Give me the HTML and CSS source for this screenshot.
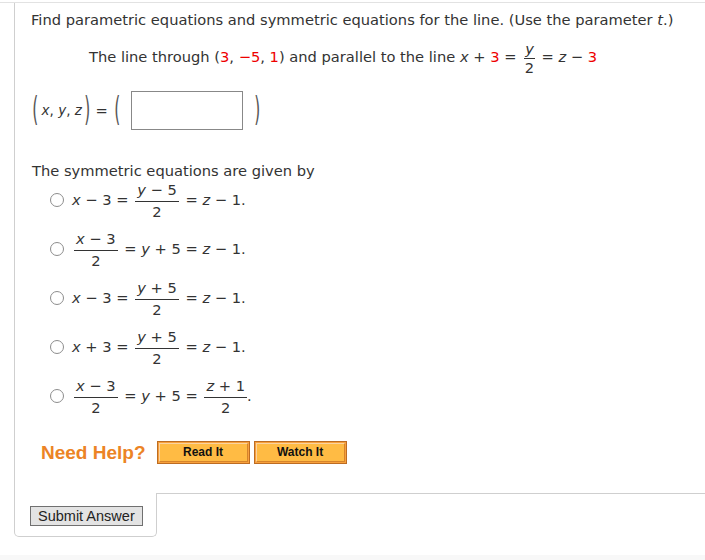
FILE: index.html
```html
<!DOCTYPE html>
<html>
<head>
<meta charset="utf-8">
<link rel="stylesheet" href="styles.css">
</head>
<body>
<div class="page">
  <div class="panel">
    <p class="q">Find parametric equations and symmetric equations for the line. (Use the parameter <i>t</i>.)</p>
    <div class="given">The line through (<span class="r">3</span>, <span class="r">−5</span>, <span class="r">1</span>) and parallel to the line <i>x</i> + <span class="r">3</span> = <span class="frac sm"><span class="num"><i>y</i></span><span class="den">2</span></span> = <i>z</i> − <span class="r">3</span></div>
    <div class="param">
      <span class="paren">(</span><span class="vars"><i>x</i>, <i>y</i>, <i>z</i></span><span class="paren">)</span><span class="eq">=</span><span class="paren">(</span><span class="box"></span><span class="paren">)</span>
    </div>
    <p class="sym">The symmetric equations are given by</p>
    <ul class="opts">
      <li><span class="radio"></span><span class="m"><i>x</i> − 3 = <span class="frac"><span class="num"><i>y</i> − 5</span><span class="den">2</span></span> = <i>z</i> − 1.</span></li>
      <li><span class="radio"></span><span class="m"><span class="frac nl"><span class="num"><i>x</i> − 3</span><span class="den">2</span></span> = <i>y</i> + 5 = <i>z</i> − 1.</span></li>
      <li><span class="radio"></span><span class="m"><i>x</i> − 3 = <span class="frac"><span class="num"><i>y</i> + 5</span><span class="den">2</span></span> = <i>z</i> − 1.</span></li>
      <li><span class="radio"></span><span class="m"><i>x</i> + 3 = <span class="frac"><span class="num"><i>y</i> + 5</span><span class="den">2</span></span> = <i>z</i> − 1.</span></li>
      <li><span class="radio"></span><span class="m"><span class="frac nl"><span class="num"><i>x</i> − 3</span><span class="den">2</span></span> = <i>y</i> + 5 = <span class="frac nr"><span class="num"><i>z</i> + 1</span><span class="den">2</span></span>.</span></li>
    </ul>
    <div class="help">
      <span class="need">Need Help?</span>
      <span class="btn"><span>Read It</span></span>
      <span class="btn"><span>Watch It</span></span>
    </div>
  </div>
  <div class="foot">
    <div class="tab"><button class="submit">Submit Answer</button></div>
    <div class="rest"></div>
  </div>
  <div class="strip"></div>
</div>
</body>
</html>
```
FILE: styles.css
```css
html, body {
  margin: 0;
  padding: 0;
  background: #fff;
}
.page {
  margin-top: 2px;
  border-top: 1px solid #e2e2e2;
  font-family: "DejaVu Sans", Verdana, sans-serif;
  font-size: 14.67px;
  color: #333;
}
.panel {
  margin-left: 14px;
  border-left: 1px solid #cfcfcf;
  padding: 8px 0 0 16px;
  height: 482px;
}
.q {
  margin: 0;
  line-height: 18px;
}
.r { color: #e00; }
i { font-style: italic; }
.given {
  margin: 10px 0 0 58px;
  line-height: 18px;
}
.frac {
  display: inline-block;
  vertical-align: -12px;
  text-align: center;
  margin: 0 2px;
}
.frac .num {
  display: block;
  border-bottom: 1px solid #333;
  padding: 0 2px;
  line-height: 22px;
}
.frac .den {
  display: block;
  line-height: 20px;
}
.frac.sm {
  vertical-align: -11px;
  margin: 0 2px 0 3px;
}
.frac.sm .num { padding: 0 1px; line-height: 19px; }
.frac.sm .den { line-height: 18px; }
.frac.nl { margin-left: 2px; }
.frac.nr { margin-right: 0; }
.param {
  display: flex;
  align-items: center;
  margin-top: 13px;
  height: 40px;
}
.paren {
  display: inline-block;
  font-size: 22px;
  color: #555;
  transform: scale(0.7, 1.55);
  line-height: 20px;
}
.vars {
  font-size: 13.5px;
  margin: 0 1px 0 2px;
}
.eq {
  margin: 0 5px 0 4px;
}
.box {
  width: 110px;
  height: 37px;
  border: 1px solid #888;
  margin: 0 10px 0 10px;
}
.sym {
  margin: 32px 0 0 1px;
  line-height: 18px;
}
.opts {
  list-style: none;
  margin: 0;
  padding: 0 0 0 19px;
}
.opts li {
  display: flex;
  align-items: center;
  height: 43px;
  margin-top: 6px;
}
.opts li:first-child { margin-top: -1px; }
.radio {
  width: 12px;
  height: 12px;
  border: 1px solid #8d8d8d;
  border-radius: 50%;
  margin: 0 8px 2px 0;
  flex: none;
}
.m { white-space: nowrap; line-height: 18px; }
.help {
  display: flex;
  align-items: center;
  margin: 23px 0 0 10px;
}
.need {
  font-family: "Liberation Sans", Arial, sans-serif;
  font-weight: bold;
  font-size: 19px;
  color: #ec8425;
  margin-right: 11px;
}
.btn {
  display: inline-block;
  border: 1px solid #bd6c22;
  background: #f7a03c;
  padding: 1px;
  margin-right: 4px;
}
.btn span {
  display: block;
  width: 87px;
  height: 17px;
  line-height: 17px;
  border: 1px solid;
  border-color: #fbd3a0 #d6842c #d6842c #fbd3a0;
  background: #ffbb44;
  text-align: center;
  font-family: "Liberation Sans", Arial, sans-serif;
  font-weight: bold;
  font-size: 12px;
  color: #111;
}
.foot {
  display: flex;
  height: 44px;
}
.tab {
  width: 143px;
  border: 1px solid #cfcfcf;
  border-top: none;
  border-radius: 0 0 5px 5px;
  margin-left: 14px;
  padding: 13px 0 0 15px;
  box-sizing: border-box;
}
.rest {
  flex: 1;
  border-top: 1px solid #cfcfcf;
}
.submit {
  display: block;
  font-family: "Liberation Sans", Arial, sans-serif;
  font-size: 14.5px;
  color: #222;
  background: #e3e3e3;
  border: 1px solid #707070;
  border-radius: 0;
  padding: 0 7px;
  height: 20px;
  line-height: 18px;
  margin: 0;
}
.strip {
  height: 30px;
  margin-top: 18px;
  background: #f8f8f8;
}
```
